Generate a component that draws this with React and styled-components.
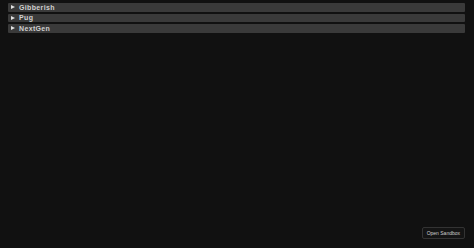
import React from 'react';
import styled, { createGlobalStyle } from 'styled-components';

const Global = createGlobalStyle`
  html, body { margin: 0; padding: 0; background: #111111; height: 100%; }
  #root { height: 100%; }
`;

const Page = styled.div`
  height: 248px;
  display: flex;
  flex-direction: column;
  justify-content: space-between;
  padding: 3px 9px 9px 8px;
  box-sizing: border-box;
  font-family: 'Liberation Sans', Arial, sans-serif;
`;

const List = styled.div`
  display: flex;
  flex-direction: column;
  gap: 2px;
`;

const Row = styled.div`
  height: 8.5px;
  background: #3a3a3a;
  border-radius: 1px;
  display: flex;
  align-items: center;
  padding-left: 3px;
  gap: 4px;
  color: #d0d0d0;
  font-size: 7px;
  font-weight: bold;
  letter-spacing: 0.35px;
  line-height: 1;
`;

const Arrow = styled.span`
  width: 0;
  height: 0;
  border-top: 2.5px solid transparent;
  border-bottom: 2.5px solid transparent;
  border-left: 4px solid #e0e0e0;
`;

const Footer = styled.div`
  display: flex;
  justify-content: flex-end;
`;

const Button = styled.button`
  font-family: 'Liberation Sans', Arial, sans-serif;
  font-size: 5px;
  color: #cfcfcf;
  background: #141414;
  border: 1px solid #333333;
  border-radius: 2px;
  padding: 0 4px;
  height: 12px;
  cursor: pointer;
`;

const items = ['Gibberish', 'Pug', 'NextGen'];

export default function App() {
  return (
    <>
      <Global />
      <Page>
        <List>
          {items.map((name) => (
            <Row key={name}>
              <Arrow />
              {name}
            </Row>
          ))}
        </List>
        <Footer>
          <Button>Open Sandbox</Button>
        </Footer>
      </Page>
    </>
  );
}
